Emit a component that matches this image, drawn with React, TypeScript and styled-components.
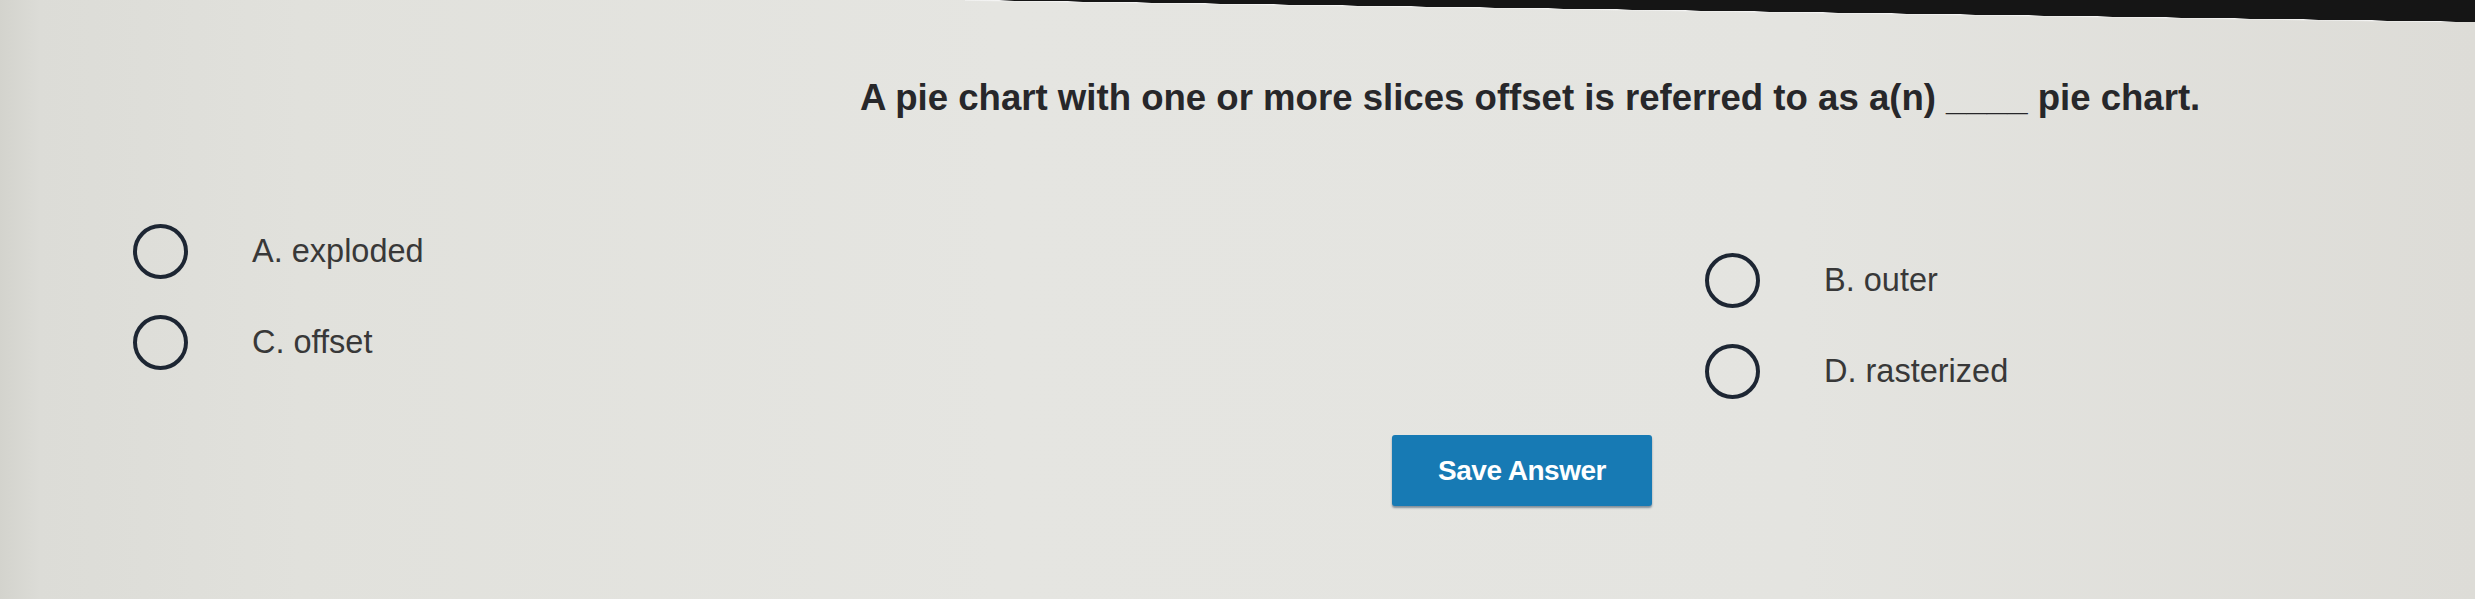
import React from "react";
import styled, { createGlobalStyle } from "styled-components";

type Choice = {
  key: string;
  label: string;
};

const leftChoices: Choice[] = [
  { key: "A", label: "exploded" },
  { key: "C", label: "offset" },
];

const rightChoices: Choice[] = [
  { key: "B", label: "outer" },
  { key: "D", label: "rasterized" },
];

const GlobalStyle = createGlobalStyle`
  html, body {
    margin: 0;
    padding: 0;
  }
  body {
    font-family: "Liberation Sans", Arial, sans-serif;
    background: #e1e1dd;
  }
`;

const Option = ({ choice }: { choice: Choice }) => (
  <OptionRow>
    <Radio />
    <OptionLabel>
      {choice.key}. {choice.label}
    </OptionLabel>
  </OptionRow>
);

export default function App() {
  return (
    <>
      <GlobalStyle />
      <Page>
        <Question>
          A pie chart with one or more slices offset is referred to as a(n) ____
          pie chart.
        </Question>
        <Choices>
          <Column>
            {leftChoices.map((c) => (
              <Option key={c.key} choice={c} />
            ))}
          </Column>
          <Column $offset={29}>
            {rightChoices.map((c) => (
              <Option key={c.key} choice={c} />
            ))}
          </Column>
        </Choices>
        <Actions>
          <SaveButton type="button">Save Answer</SaveButton>
        </Actions>
      </Page>
    </>
  );
}

const Page = styled.div`
  min-height: 599px;
  box-sizing: border-box;
  padding-top: 78px;
  background-color: #e2e2de;
  background-image: linear-gradient(
      to bottom left,
      #151515 49.5%,
      rgba(246, 246, 246, 0.9) 50%,
      transparent 53%
    ),
    linear-gradient(
      to right,
      #d3d3cd 0px,
      #dcdcd7 40px,
      #e1e1dc 300px,
      #e5e5e1 1000px,
      #e4e4e0 1800px,
      #dddcd7 2475px
    );
  background-size: 1510px 22px, 100% 100%;
  background-position: top right, 0 0;
  background-repeat: no-repeat;
  overflow: hidden;
`;

const Question = styled.h1`
  margin: 0;
  padding-left: 860px;
  font-size: 36.6px;
  line-height: 40px;
  font-weight: 700;
  color: #27272a;
  white-space: nowrap;
`;

const Choices = styled.div`
  display: grid;
  grid-template-columns: 1572px 1fr;
  align-items: start;
  margin-top: 106px;
  padding-left: 133px;
`;

const Column = styled.div<{ $offset?: number }>`
  display: flex;
  flex-direction: column;
  gap: 36px;
  margin-top: ${(p) => p.$offset ?? 0}px;
`;

const OptionRow = styled.label`
  display: flex;
  align-items: center;
  gap: 64px;
  height: 55px;
`;

const Radio = styled.span`
  width: 55px;
  height: 55px;
  box-sizing: border-box;
  border: 4px solid #1d2633;
  border-radius: 50%;
  flex-shrink: 0;
`;

const OptionLabel = styled.span`
  font-size: 32.5px;
  color: #383838;
  line-height: 1;
`;

const Actions = styled.div`
  display: flex;
  padding-left: 1392px;
  margin-top: 36px;
`;

const SaveButton = styled.button`
  width: 260px;
  height: 71px;
  border: none;
  border-radius: 3px;
  background: #177ab4;
  box-shadow: 0 2px 2px rgba(10, 40, 70, 0.45);
  color: #ffffff;
  font-family: "Liberation Sans", Arial, sans-serif;
  font-weight: 700;
  font-size: 28px;
  letter-spacing: -0.5px;
  cursor: pointer;
`;
